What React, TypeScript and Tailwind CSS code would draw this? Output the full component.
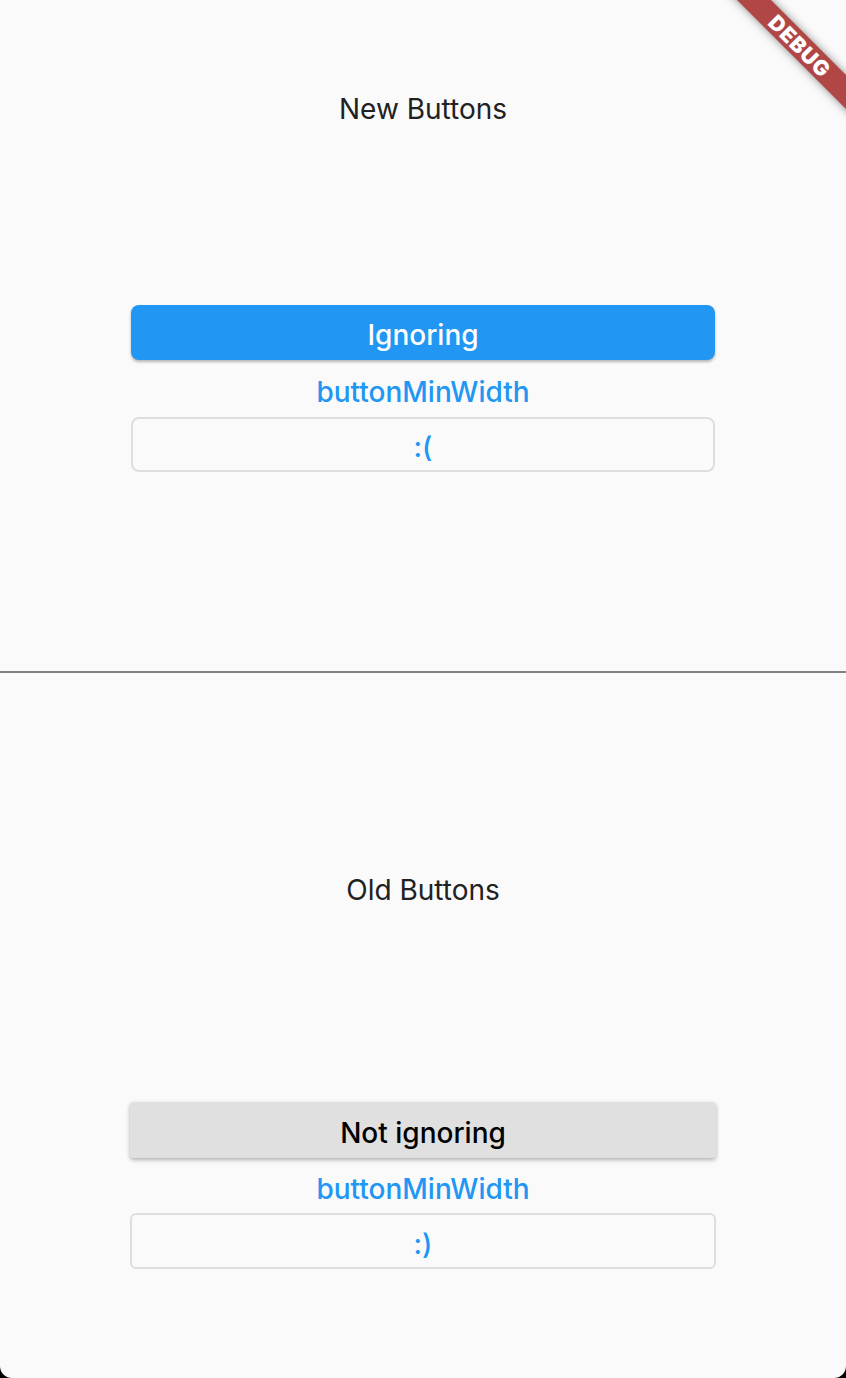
import React from "react";

export default function App() {
  return (
    <div className="bg-black w-[846px] h-[1378px]" style={{ fontFamily: "Inter, 'Noto Sans', sans-serif" }}>
      <div className="relative w-[846px] h-[1378px] bg-[#fafafa] rounded-b-[12px] overflow-hidden flex flex-col">
        {/* Top half */}
        <div className="h-[671px] flex flex-col items-center">
          <div className="mt-[92px] h-[34px] leading-[34px] text-[28px] text-[#212121]">New Buttons</div>
          <button className="mt-[179px] w-[584px] h-[55px] pt-[5px] rounded-[8px] bg-[#2196f3] text-white text-[28px] font-medium shadow-[0_2px_3px_rgba(0,0,0,0.28)] flex items-center justify-center">
            Ignoring
          </button>
          <div className="mt-[15px] h-[34px] leading-[34px] text-[28px] font-medium text-[#2196f3]">buttonMinWidth</div>
          <button className="mt-[8px] w-[584px] h-[55px] pt-[5px] rounded-[8px] border-2 border-[#dedede] text-[#2196f3] text-[28px] font-medium flex items-center justify-center">
            :(
          </button>
        </div>
        <div className="h-[2px] bg-[#7f7f7f]" />
        {/* Bottom half */}
        <div className="flex-1 flex flex-col items-center">
          <div className="mt-[200px] h-[34px] leading-[34px] text-[28px] text-[#212121]">Old Buttons</div>
          <button className="mt-[195px] w-[586px] h-[56px] pt-[5px] rounded-[4px] bg-[#e0e0e0] text-black text-[28px] font-medium shadow-[0_2px_4px_rgba(0,0,0,0.3)] flex items-center justify-center">
            Not ignoring
          </button>
          <div className="mt-[14px] h-[34px] leading-[34px] text-[28px] font-medium text-[#2196f3]">buttonMinWidth</div>
          <button className="mt-[7px] w-[586px] h-[56px] pt-[5px] rounded-[6px] border-2 border-[#dedede] text-[#2196f3] text-[28px] font-medium flex items-center justify-center">
            :)
          </button>
        </div>
        {/* Debug banner */}
        <div className="absolute left-[690px] top-[34px] w-[220px] h-[24px] rotate-45 bg-[#b04646] shadow-[0_0_8px_rgba(0,0,0,0.45)] flex items-center justify-center">
          <span className="text-white text-[21px] font-black tracking-[1px] leading-none">DEBUG</span>
        </div>
      </div>
    </div>
  );
}
